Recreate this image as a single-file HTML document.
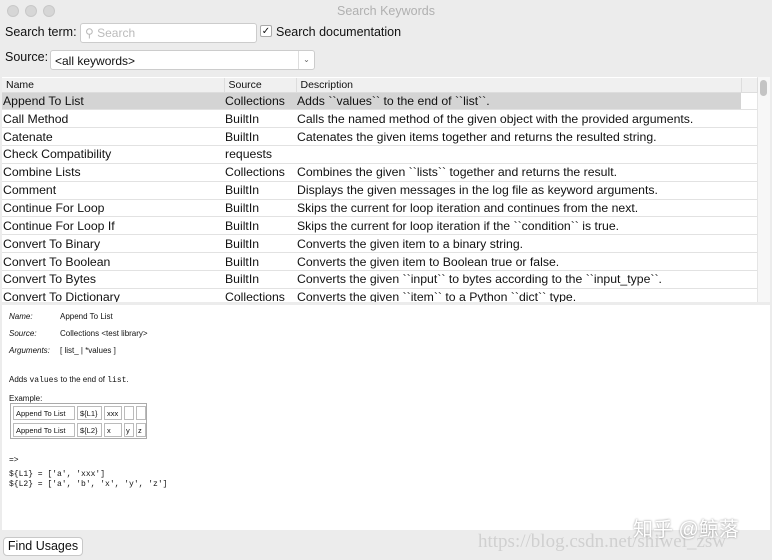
<!DOCTYPE html>
<html><head><style>
*{box-sizing:border-box;margin:0;padding:0}
body{width:772px;height:560px;overflow:hidden;background:#ececec;font-family:"Liberation Sans",sans-serif;font-size:12px;color:#111;position:relative}
.abs{position:absolute}
.dot{position:absolute;top:5px;width:12px;height:12px;border-radius:50%;background:#d6d6d6;border:1px solid #c8c8c8}
.title{left:0;width:772px;top:4px;text-align:center;color:#b0b0b0;font-size:12.5px}
table{border-collapse:collapse;position:absolute;left:2px;top:78px;width:755px;table-layout:fixed}
td{height:17.85px;border-bottom:1px solid #e2e2e2;white-space:nowrap;overflow:hidden;font-size:12.25px;padding-left:1px;background:#fff}
tr.h td{height:14px;font-size:10.5px;background:#f0f0f0;border-right:1px solid #ddd;padding-left:4px;border-bottom:1px solid #ddd}
tr.sel td{background:#d4d4d4}
.doc{left:2px;top:305px;width:768px;height:225px;background:#fff}
.s{font-size:8px;position:absolute}
.mono{font-family:"Liberation Mono",monospace;font-size:8px}
</style></head><body>
<div class="dot" style="left:7px"></div><div class="dot" style="left:25px"></div><div class="dot" style="left:43px"></div>
<div class="abs title">Search Keywords</div>
<div class="abs" style="left:5px;top:25px;font-size:12.5px">Search term:</div>
<div class="abs" style="left:80px;top:23px;width:177px;height:20px;background:#fff;border:1px solid #ccc;border-radius:3px;color:#bbb;padding:2px 0 0 4px">&#9906; Search</div>
<div class="abs" style="left:260px;top:25px;width:12px;height:12px;background:#fff;border:1px solid #aaa;border-radius:2px;font-size:10px;line-height:11px;text-align:center">✓</div>
<div class="abs" style="left:276px;top:25px;font-size:12.5px">Search documentation</div>
<div class="abs" style="left:5px;top:50px;font-size:12.5px">Source:</div>
<div class="abs" style="left:50px;top:50px;width:265px;height:20px;background:#fff;border:1px solid #ccc;border-radius:3px;padding:3px 0 0 4px">&lt;all keywords&gt;<span style="position:absolute;right:0;top:0;width:16px;height:18px;border-left:1px solid #ddd;font-size:8px;text-align:center;line-height:18px;color:#666">⌄</span></div>
<div class="abs" style="left:2px;top:77px;width:768px;height:228px;background:#fff"></div>
<div class="abs" style="left:757px;top:77px;width:13px;height:228px;background:#f7f7f7;border-left:1px solid #e5e5e5"></div>
<div class="abs" style="left:760px;top:80px;width:7px;height:16px;background:#c4c4c4;border-radius:4px"></div>
<table>
<col style="width:222px"><col style="width:72px"><col style="width:445px"><col style="width:16px">
<tr class="h"><td>Name</td><td>Source</td><td>Description</td><td></td></tr>
<tr class="sel"><td>Append To List</td><td>Collections</td><td>Adds ``values`` to the end of ``list``.</td><td style="background:#fff"></td></tr>
<tr><td>Call Method</td><td>BuiltIn</td><td colspan="2">Calls the named method of the given object with the provided arguments.</td></tr>
<tr><td>Catenate</td><td>BuiltIn</td><td colspan="2">Catenates the given items together and returns the resulted string.</td></tr>
<tr><td>Check Compatibility</td><td>requests</td><td colspan="2"></td></tr>
<tr><td>Combine Lists</td><td>Collections</td><td colspan="2">Combines the given ``lists`` together and returns the result.</td></tr>
<tr><td>Comment</td><td>BuiltIn</td><td colspan="2">Displays the given messages in the log file as keyword arguments.</td></tr>
<tr><td>Continue For Loop</td><td>BuiltIn</td><td colspan="2">Skips the current for loop iteration and continues from the next.</td></tr>
<tr><td>Continue For Loop If</td><td>BuiltIn</td><td colspan="2">Skips the current for loop iteration if the ``condition`` is true.</td></tr>
<tr><td>Convert To Binary</td><td>BuiltIn</td><td colspan="2">Converts the given item to a binary string.</td></tr>
<tr><td>Convert To Boolean</td><td>BuiltIn</td><td colspan="2">Converts the given item to Boolean true or false.</td></tr>
<tr><td>Convert To Bytes</td><td>BuiltIn</td><td colspan="2">Converts the given ``input`` to bytes according to the ``input_type``.</td></tr>
<tr><td>Convert To Dictionary</td><td>Collections</td><td colspan="2">Converts the given ``item`` to a Python ``dict`` type.</td></tr>
</table>
<div class="abs" style="left:0;top:302px;width:772px;height:3px;background:#ececec"></div>
<div class="abs doc">
<div class="s" style="left:7px;top:7px;font-style:italic">Name:</div><div class="s" style="left:58px;top:7px">Append To List</div>
<div class="s" style="left:7px;top:24px;font-style:italic">Source:</div><div class="s" style="left:58px;top:24px">Collections &lt;test library&gt;</div>
<div class="s" style="left:7px;top:41px;font-style:italic">Arguments:</div><div class="s" style="left:58px;top:41px">[ list_ | *values ]</div>
<div class="s" style="left:7px;top:70px">Adds <span class="mono">values</span> to the end of <span class="mono">list</span>.</div>
<div class="s" style="left:7px;top:89px">Example:</div>
<div class="abs" style="left:8px;top:98px;width:137px;height:36px;border:1px solid #aaa;font-size:7.5px">
<div class="abs" style="left:2px;top:2px;width:62px;height:14px;border:1px solid #bbb;padding:2px">Append To List</div>
<div class="abs" style="left:66px;top:2px;width:25px;height:14px;border:1px solid #bbb;padding:2px">${L1}</div>
<div class="abs" style="left:93px;top:2px;width:18px;height:14px;border:1px solid #bbb;padding:2px">xxx</div>
<div class="abs" style="left:113px;top:2px;width:10px;height:14px;border:1px solid #bbb"></div>
<div class="abs" style="left:125px;top:2px;width:10px;height:14px;border:1px solid #bbb"></div>
<div class="abs" style="left:2px;top:19px;width:62px;height:14px;border:1px solid #bbb;padding:2px">Append To List</div>
<div class="abs" style="left:66px;top:19px;width:25px;height:14px;border:1px solid #bbb;padding:2px">${L2}</div>
<div class="abs" style="left:93px;top:19px;width:18px;height:14px;border:1px solid #bbb;padding:2px">x</div>
<div class="abs" style="left:113px;top:19px;width:10px;height:14px;border:1px solid #bbb;padding:2px 1px">y</div>
<div class="abs" style="left:125px;top:19px;width:10px;height:14px;border:1px solid #bbb;padding:2px 1px">z</div>
</div>
<div class="abs mono" style="left:7px;top:151px">=&gt;</div>
<div class="abs mono" style="left:7px;top:165px">${L1} = ['a', 'xxx']</div>
<div class="abs mono" style="left:7px;top:175px">${L2} = ['a', 'b', 'x', 'y', 'z']</div>
</div>
<div class="abs" style="left:3px;top:537px;width:80px;height:19px;background:#fff;border:1px solid #c8c8c8;border-radius:4px;font-size:12.5px;text-align:center;line-height:17px">Find Usages</div>
<div class="abs" style="left:478px;top:531px;font-family:'Liberation Serif',serif;font-size:19px;color:#d0d0d0;white-space:nowrap">https://blog.csdn.net/shiwei_zsw</div>
<div class="abs" style="left:633px;top:513px;font-family:'Liberation Sans','Noto Sans CJK SC',sans-serif;font-size:20px;color:#fff;text-shadow:0 0 2px #888">知乎 @鲸落</div>
</body></html>
